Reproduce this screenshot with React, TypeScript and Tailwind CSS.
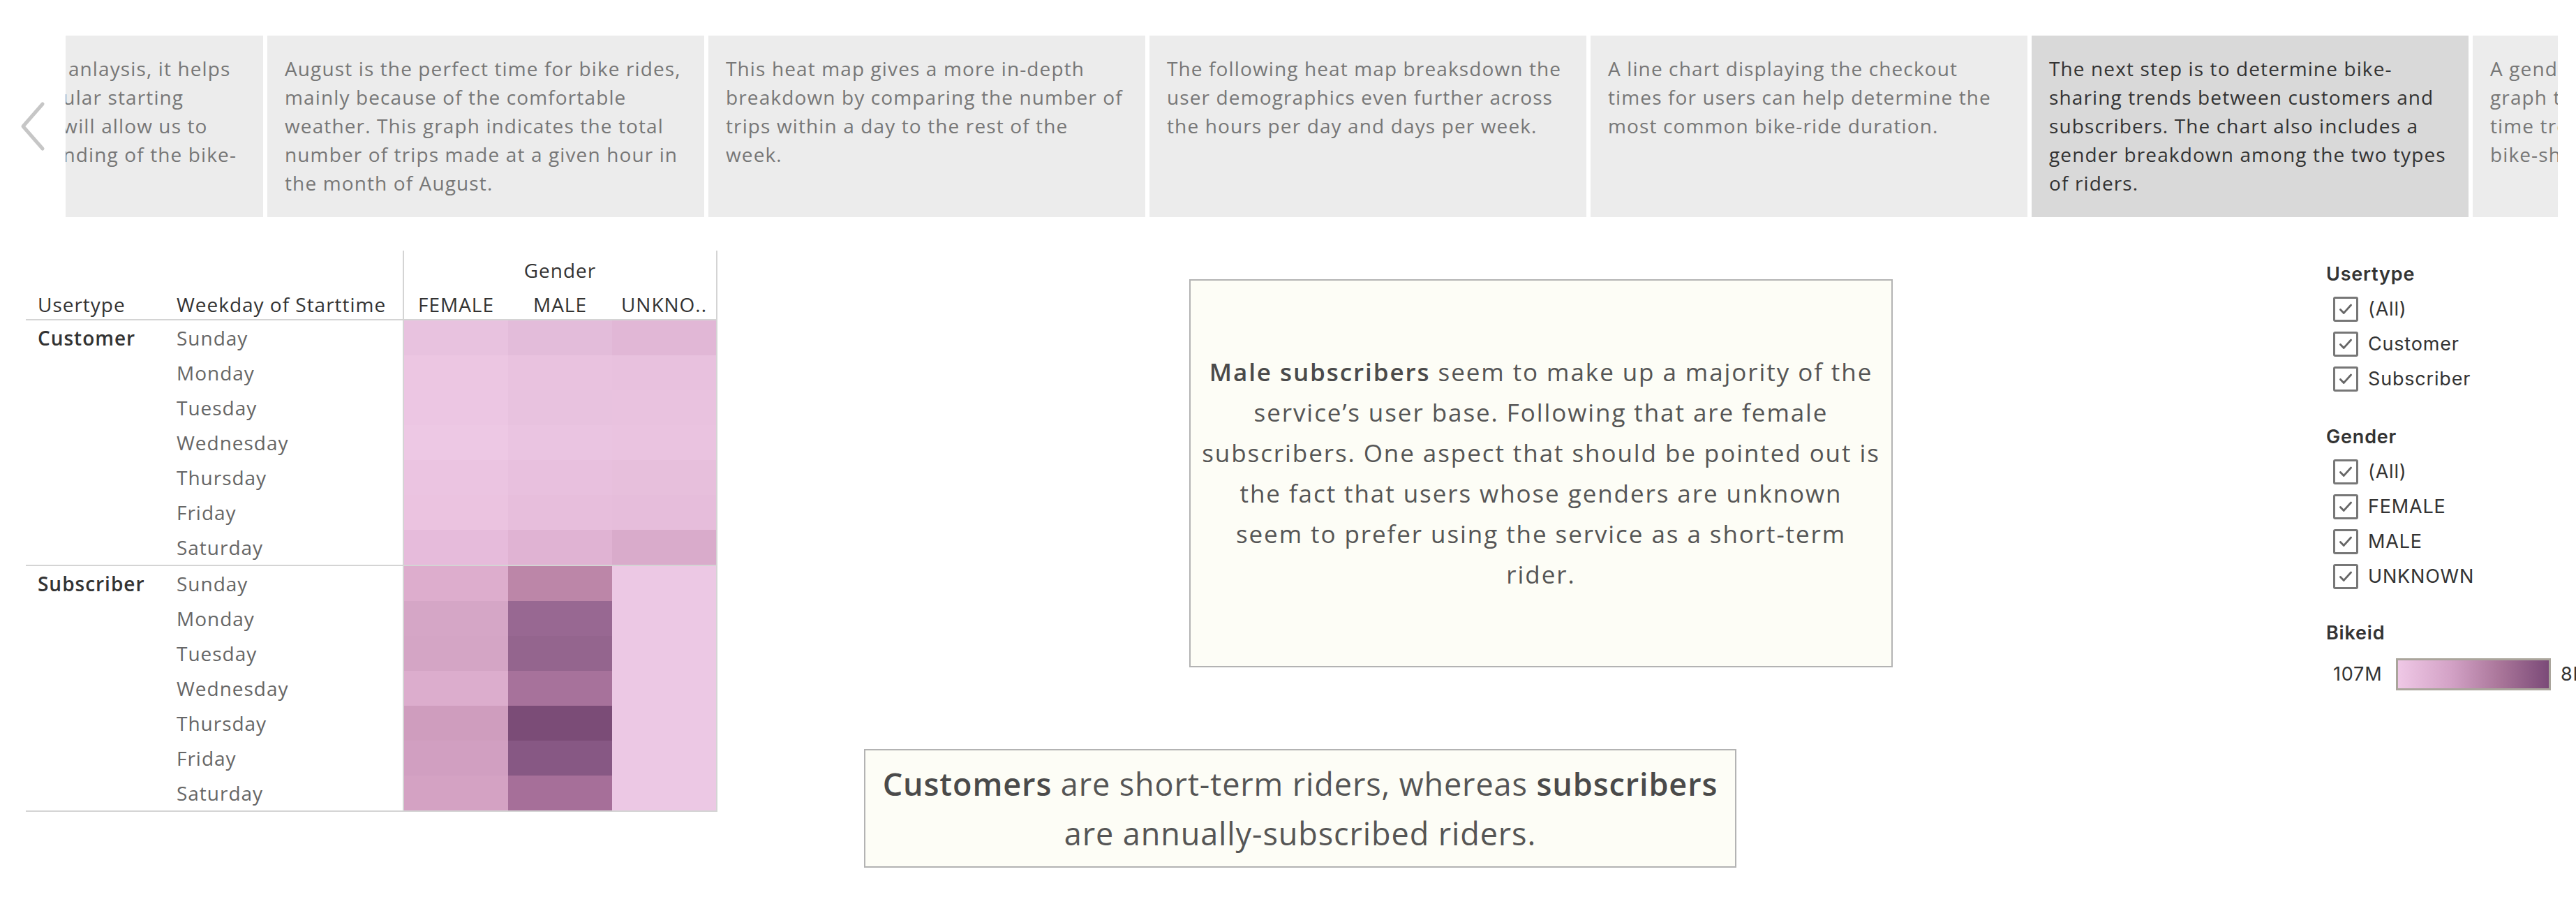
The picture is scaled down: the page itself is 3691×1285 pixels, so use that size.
import React from 'react'

const stories = [
  {
    lines: [
      'Through its geospatial anlaysis, it helps',
      'discover the most popular starting',
      'locations. This insight will allow us to',
      'gain a better understanding of the bike-',
      'sharing market.',
    ],
  },
  {
    lines: [
      'August is the perfect time for bike rides,',
      'mainly because of the comfortable',
      'weather. This graph indicates the total',
      'number of trips made at a given hour in',
      'the month of August.',
    ],
  },
  {
    lines: [
      'This heat map gives a more in-depth',
      'breakdown by comparing the number of',
      'trips within a day to the rest of the',
      'week.',
    ],
  },
  {
    lines: [
      'The following heat map breaksdown the',
      'user demographics even further across',
      'the hours per day and days per week.',
    ],
  },
  {
    lines: [
      'A line chart displaying the checkout',
      'times for users can help determine the',
      'most common bike-ride duration.',
    ],
  },
  {
    active: true,
    lines: [
      'The next step is to determine bike-',
      'sharing trends between customers and',
      'subscribers. The chart also includes a',
      'gender breakdown among the two types',
      'of riders.',
    ],
  },
  {
    lines: [
      'A gender breakdown of trip duration',
      'graph that shows the checkout',
      'time trends for users of the',
      'bike-sharing service.',
    ],
  },
]

const days = ['Sunday', 'Monday', 'Tuesday', 'Wednesday', 'Thursday', 'Friday', 'Saturday']

const groups = [
  {
    name: 'Customer',
    cells: [
      ['bg-[#e8c2df]', 'bg-[#e3bcda]', 'bg-[#e1b7d6]'],
      ['bg-[#ecc6e2]', 'bg-[#e9c2df]', 'bg-[#e8c1de]'],
      ['bg-[#ecc6e3]', 'bg-[#e8c2df]', 'bg-[#e9c2df]'],
      ['bg-[#edc8e4]', 'bg-[#eac4e1]', 'bg-[#eac3e0]'],
      ['bg-[#ebc4e1]', 'bg-[#e8c0de]', 'bg-[#e7bfdc]'],
      ['bg-[#ebc3e0]', 'bg-[#e7bedc]', 'bg-[#e6bddb]'],
      ['bg-[#e6bbdb]', 'bg-[#e0b3d3]', 'bg-[#d9abcb]'],
    ],
  },
  {
    name: 'Subscriber',
    cells: [
      ['bg-[#ddadcd]', 'bg-[#bc86a8]', 'bg-[#ecc8e4]'],
      ['bg-[#d5a6c6]', 'bg-[#986892]', 'bg-[#ecc8e4]'],
      ['bg-[#d4a5c5]', 'bg-[#94658e]', 'bg-[#ecc8e4]'],
      ['bg-[#dcadcd]', 'bg-[#a7729b]', 'bg-[#ecc8e4]'],
      ['bg-[#cf9dbe]', 'bg-[#7b4c77]', 'bg-[#ecc8e4]'],
      ['bg-[#d19fc1]', 'bg-[#875884]', 'bg-[#ecc8e4]'],
      ['bg-[#d4a2c3]', 'bg-[#a66f99]', 'bg-[#ecc8e4]'],
    ],
  },
]

function CheckRow({ label }: { label: string }) {
  return (
    <div className="h-[50px] flex items-center pl-[10px]">
      <div className="w-[36px] h-[36px] border-[3px] border-[#777] rounded-[3px] flex items-center justify-center bg-white">
        <svg className="w-[26px] h-[26px]" viewBox="0 0 24 24" fill="none">
          <path d="M5 12.5l4.5 4.5L19 6.5" stroke="#666" strokeWidth={2.6} strokeLinecap="round" strokeLinejoin="round" />
        </svg>
      </div>
      <span className="ml-[14px] text-[#333]">{label}</span>
    </div>
  )
}

export default function App() {
  return (
    <div className="w-[3691px] h-[1285px] overflow-hidden bg-white font-['Open_Sans',sans-serif]">
      {/* Story points */}
      <div className="flex pt-[51px] h-[311px]">
        <div className="w-[94px] shrink-0 flex items-center justify-center">
          <svg className="w-[44px] h-[74px]" viewBox="0 0 44 74" fill="none">
            <polyline points="36,5 8,37 36,69" stroke="#c6c6c6" strokeWidth={5} strokeLinecap="round" strokeLinejoin="round" />
          </svg>
        </div>
        <div className="w-[3571px] shrink-0 overflow-hidden">
          <div className="flex gap-[6px] ml-[-343px]">
            {stories.map((s, i) => (
              <div
                key={i}
                className={
                  'w-[626px] h-[260px] shrink-0 pl-[25px] pr-[16px] pt-[27px] text-[28px] leading-[41px] tracking-[0.04em] whitespace-nowrap ' +
                  (s.active ? 'bg-[#d9d9d9] text-[#333]' : 'bg-[#ececec] text-[#777]')
                }
              >
                {s.lines.map((l, j) => (
                  <div key={j}>{l}</div>
                ))}
              </div>
            ))}
          </div>
        </div>
      </div>

      <div className="flex items-start">
        {/* Crosstab */}
        <div className="ml-[37px] mt-[48px] w-[991px] shrink-0 text-[28px] tracking-[0.035em]">
          <div className="flex h-[100px] border-b-2 border-[#d4d4d4] text-[#333]">
            <div className="w-[540px] flex items-end leading-[42px]">
              <div className="w-[216px] pl-[17px]">Usertype</div>
              <div>Weekday of Starttime</div>
            </div>
            <div className="w-[451px] border-x-2 border-[#d4d4d4] flex flex-col">
              <div className="h-[56px] flex items-center justify-center">Gender</div>
              <div className="flex-1 grid grid-cols-3 items-center text-center">
                <div>FEMALE</div>
                <div>MALE</div>
                <div>UNKNO..</div>
              </div>
            </div>
          </div>
          {groups.map((g) => (
            <div key={g.name} className="border-b-2 border-[#d4d4d4]">
              {days.map((d, i) => (
                <div key={d} className="flex h-[50px]">
                  <div className="w-[216px] pl-[17px] flex items-center font-semibold text-[#333]">
                    {i === 0 ? g.name : ''}
                  </div>
                  <div className="w-[324px] flex items-center text-[#666]">{d}</div>
                  <div className="w-[451px] border-x-2 border-[#d4d4d4] grid grid-cols-3">
                    {g.cells[i].map((c, k) => (
                      <div key={k} className={c}></div>
                    ))}
                  </div>
                </div>
              ))}
            </div>
          ))}
        </div>

        {/* Annotations */}
        <div className="flex-1 flex flex-col items-start">
          <div className="ml-[676px] mt-[89px] w-[1008px] h-[556px] border-2 border-[#b3b3b3] bg-[#fdfdf6] flex items-center justify-center text-center text-[35px] leading-[58px] tracking-[0.055em] text-[#555] whitespace-nowrap">
            <p>
              <span className="font-semibold text-[#4a4a4a]">Male subscribers</span> seem to make up a majority of the
              <br />
              service’s user base. Following that are female
              <br />
              subscribers. One aspect that should be pointed out is
              <br />
              the fact that users whose genders are unknown
              <br />
              seem to prefer using the service as a short-term
              <br />
              rider.
            </p>
          </div>
          <div className="ml-[210px] mt-[117px] w-[1250px] h-[170px] border-2 border-[#b3b3b3] bg-[#fdfdf6] flex items-center justify-center text-center text-[45px] leading-[71px] tracking-[0.02em] text-[#555] whitespace-nowrap">
            <p>
              <span className="font-semibold text-[#4a4a4a]">Customers</span> are short-term riders, whereas{' '}
              <span className="font-semibold text-[#4a4a4a]">subscribers</span>
              <br />
              are annually-subscribed riders.
            </p>
          </div>
        </div>

        {/* Filters and legend */}
        <div className="w-[358px] shrink-0 pt-[57px] font-['Inter',sans-serif] text-[27px] tracking-[0.03em] whitespace-nowrap">
          <div className="h-[50px] flex items-center font-semibold text-[#333]">Usertype</div>
          <CheckRow label="(All)" />
          <CheckRow label="Customer" />
          <CheckRow label="Subscriber" />

          <div className="mt-[33px] h-[50px] flex items-center font-semibold text-[#333]">Gender</div>
          <CheckRow label="(All)" />
          <CheckRow label="FEMALE" />
          <CheckRow label="MALE" />
          <CheckRow label="UNKNOWN" />

          <div className="mt-[31px] h-[50px] flex items-center font-semibold text-[#333]">Bikeid</div>
          <div className="mt-[9px] h-[50px] flex items-center pl-[10px] text-[#333]">
            <span className="w-[90px] shrink-0">107M</span>
            <div className="w-[222px] h-[46px] shrink-0 border-[3px] border-[#aaa59c] bg-[linear-gradient(to_right,#efc8e6,#d3a2c6_35%,#a97599_68%,#7b4a78)]"></div>
            <span className="ml-[14px]">8B</span>
          </div>
        </div>
      </div>
    </div>
  )
}
